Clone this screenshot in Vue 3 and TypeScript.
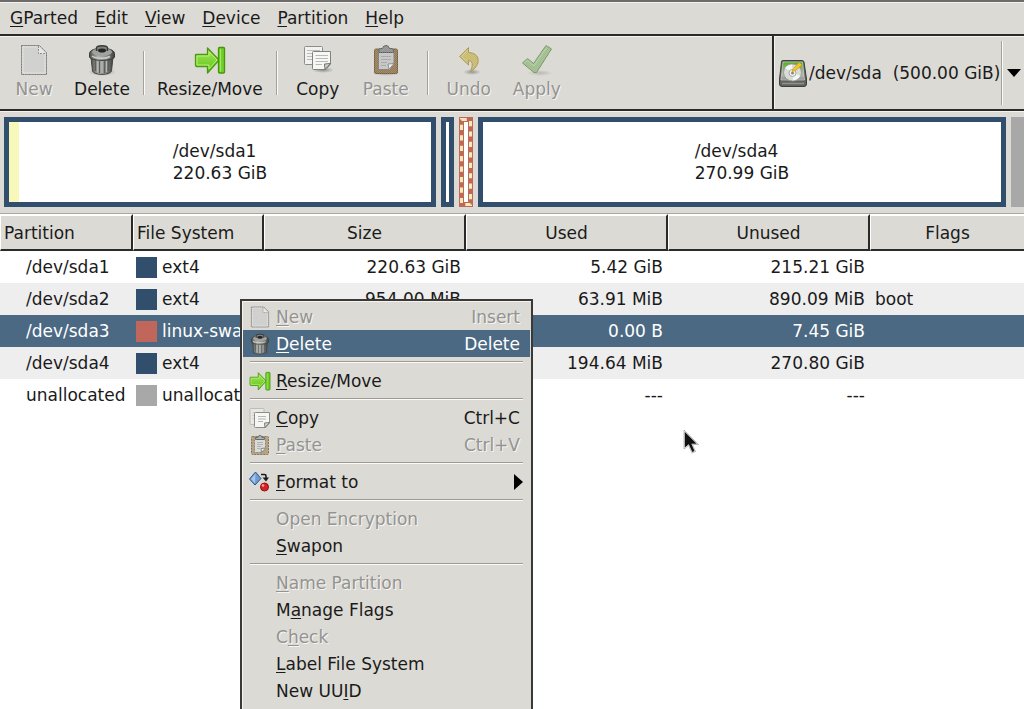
<script setup lang="ts">
import { ref } from 'vue'

interface Tool {
  label: string
  icon: string
  disabled?: boolean
  divider?: boolean
}

interface Row {
  name: string
  fs: string
  kind: 'ext' | 'swap' | 'free'
  size: string
  used: string
  unused: string
  flags: string
  selected?: boolean
}

interface Entry {
  text?: [string, string, string]
  icon?: string
  keys?: string
  disabled?: boolean
  active?: boolean
  submenu?: boolean
}

const menus = ['GParted', 'Edit', 'View', 'Device', 'Partition', 'Help']

const tools: Tool[] = [
  { label: 'New', icon: 'new', disabled: true },
  { label: 'Delete', icon: 'delete' },
  { label: 'Resize/Move', icon: 'resize', divider: true },
  { label: 'Copy', icon: 'copy', divider: true },
  { label: 'Paste', icon: 'paste', disabled: true },
  { label: 'Undo', icon: 'undo', disabled: true, divider: true },
  { label: 'Apply', icon: 'apply', disabled: true },
]

const device = ref('sda')
const columns = ['Partition', 'File System', 'Size', 'Used', 'Unused', 'Flags']

const rows: Row[] = [
  { name: '/dev/sda1', fs: 'ext4', kind: 'ext', size: '220.63 GiB', used: '5.42 GiB', unused: '215.21 GiB', flags: '' },
  { name: '/dev/sda2', fs: 'ext4', kind: 'ext', size: '954.00 MiB', used: '63.91 MiB', unused: '890.09 MiB', flags: 'boot' },
  { name: '/dev/sda3', fs: 'linux-swap', kind: 'swap', size: '7.45 GiB', used: '0.00 B', unused: '7.45 GiB', flags: '', selected: true },
  { name: '/dev/sda4', fs: 'ext4', kind: 'ext', size: '270.99 GiB', used: '194.64 MiB', unused: '270.80 GiB', flags: '' },
  { name: 'unallocated', fs: 'unallocated', kind: 'free', size: '1.00 MiB', used: '---', unused: '---', flags: '' },
]

// Each label is split into the text before, on and after its mnemonic letter.
const entries: Entry[] = [
  { text: ['', 'N', 'ew'], icon: 'new', keys: 'Insert', disabled: true },
  { text: ['', 'D', 'elete'], icon: 'delete', keys: 'Delete', active: true },
  {},
  { text: ['', 'R', 'esize/Move'], icon: 'resize' },
  {},
  { text: ['', 'C', 'opy'], icon: 'copy-small', keys: 'Ctrl+C' },
  { text: ['', 'P', 'aste'], icon: 'paste-small', keys: 'Ctrl+V', disabled: true },
  {},
  { text: ['', 'F', 'ormat to'], icon: 'format', submenu: true },
  {},
  { text: ['Open Encryption', '', ''], disabled: true },
  { text: ['', 'S', 'wapon'] },
  {},
  { text: ['', 'N', 'ame Partition'], disabled: true },
  { text: ['M', 'a', 'nage Flags'] },
  { text: ['C', 'h', 'eck'], disabled: true },
  { text: ['', 'L', 'abel File System'] },
  { text: ['New UU', 'I', 'D'] },
]
</script>

<template>
  <div class="window">
    <svg class="defs" aria-hidden="true">
      <defs>
        <linearGradient id="g-metal" x1="0" x2="1" y1="0" y2="0">
          <stop offset="0" stop-color="#4c4e4b" />
          <stop offset="0.35" stop-color="#b4b6b2" />
          <stop offset="0.65" stop-color="#8e908c" />
          <stop offset="1" stop-color="#3f413e" />
        </linearGradient>
        <linearGradient id="g-green" x1="0" x2="0" y1="0" y2="1">
          <stop offset="0" stop-color="#a6e65c" />
          <stop offset="1" stop-color="#5cc414" />
        </linearGradient>
        <linearGradient id="g-drive" x1="0" x2="0" y1="0" y2="1">
          <stop offset="0" stop-color="#4fae1c" />
          <stop offset="0.7" stop-color="#b9bcb6" />
          <stop offset="1" stop-color="#8d908a" />
        </linearGradient>
        <radialGradient id="g-shadow">
          <stop offset="0" stop-color="#000" stop-opacity="0.35" />
          <stop offset="1" stop-color="#000" stop-opacity="0" />
        </radialGradient>
        <pattern id="p-check" width="2" height="2" patternUnits="userSpaceOnUse">
          <path d="M0 0h1v1h-1zM1 1h1v1h-1z" fill="#dcdad5" fill-opacity="0.2" />
        </pattern>
      </defs>

      <symbol id="i-new" viewBox="0 0 32 32">
        <path d="M3.500 1.500H21.500L28.500 8.500V30.500H3.500Z" fill="#cfcfce" stroke="#a5a5a4" />
        <path d="M3.500 1.500H21.500L28.500 8.500V30.500H3.500Z" fill="none" stroke="#757575" stroke-dasharray="2 1" />
        <path d="M5 3H21V9H27V29H5Z" fill="none" stroke="#e2e2e0" />
        <path d="M20.500 2V9.500H28" fill="#e9e9e7" stroke="#858585" stroke-dasharray="2 1" />
        <rect width="32" height="32" fill="url(#p-check)" />
      </symbol>

      <symbol id="i-delete" viewBox="0 0 32 32">
        <ellipse cx="16" cy="28" rx="14" ry="4" fill="url(#g-shadow)" />
        <path d="M5 13L6.500 27C8 31.500 24 31.500 25.500 27L27 13Z" fill="url(#g-metal)" stroke="#434542" />
        <path d="M9.500 16V27M13.500 17V29M18.500 17V29M22.500 16V27" stroke="#5d5f5c" stroke-width="1.300" />
        <path d="M11.500 17V28M16 17V29M20.500 17V28" stroke="#b5b7b3" />
        <path d="M3.500 9.500C3.500 2.500 28.500 2.500 28.500 9.500V13C28 17.500 4 17.500 3.500 13Z" fill="url(#g-metal)" stroke="#393b38" />
        <ellipse cx="16" cy="8" rx="10" ry="4" fill="#a1a39f" />
        <path d="M10.500 7V4C10.500 1 21.500 1 21.500 4V7" fill="#80827e" stroke="#3a3c39" stroke-width="1.500" />
        <ellipse cx="16" cy="6.500" rx="4" ry="2" fill="#242524" />
        <path d="M6 12C10 15 20 15 24 12.500" fill="none" stroke="#cbcdc9" stroke-width="1.500" />
      </symbol>

      <symbol id="i-resize" viewBox="0 0 32 32">
        <path d="M1.500 11.500Q1 10.500 2.500 10.500H13.500V4L25 16L13.500 29V22.500H2.500Q1.500 22.500 1.500 21Z" fill="url(#g-green)" stroke="#499a0d" stroke-width="1.300" stroke-linejoin="round" />
        <path d="M3 12H15V8L23 16L15 25V21H3Z" fill="none" stroke="#b9ee80" />
        <rect x="24.500" y="3.500" width="6" height="25.500" rx="1" fill="#6fd02b" stroke="#459609" stroke-width="1.300" />
        <path d="M26.500 5V27.500" stroke="#a8e76b" />
      </symbol>

      <symbol id="i-copy" viewBox="0 0 32 32">
        <ellipse cx="21" cy="26" rx="11" ry="3" fill="url(#g-shadow)" />
        <rect x="2.500" y="2.500" width="18" height="18" rx="1" fill="#f2f2f1" stroke="#8c8e8a" />
        <path d="M5 6.500H18M5 9.500H18M5 12.500H10M5 15.500H10" stroke="#bcbdbb" />
        <path d="M11.500 7.500H28.500V20L24 25.500H11.500Q10.500 25.500 10.500 24.500V8.500Q10.500 7.500 11.500 7.500Z" fill="#f7f7f6" stroke="#80827e" />
        <path d="M13.500 11.500H26M13.500 14.500H26M13.500 17.500H26M13.500 20.500H20" stroke="#b8bab6" />
        <path d="M28.500 19.500L23 25.500L22.500 20Z" fill="#d1d2cf" stroke="#70726e" />
      </symbol>

      <symbol id="i-copy-small" viewBox="0 0 22 22">
        <rect x="1" y="1.500" width="14" height="16" rx="1" fill="#e8e8e5" stroke="#bcbdb9" />
        <path d="M3.500 5.500H7M3.500 8.500H5M3.500 11.500H5" stroke="#c9cac6" />
        <path d="M6.500 5.500H20.500V16L16.500 20.500H6.500Q5.500 20.500 5.500 19.500V6.500Q5.500 5.500 6.500 5.500Z" fill="#f6f6f5" stroke="#8b8d89" />
        <path d="M9 9.500H17M9 12H17M9 14.500H14" stroke="#b5b7b3" />
        <path d="M20.500 15.500L16 20.500L15.500 16Z" fill="#d8d9d6" stroke="#797b77" />
      </symbol>

      <symbol id="i-paste" viewBox="0 0 32 32">
        <ellipse cx="16" cy="29" rx="14" ry="3" fill="url(#g-shadow)" />
        <rect x="4.500" y="5" width="23" height="24.500" rx="1.500" fill="#96794f" stroke="#6f5f47" />
        <path d="M8.500 7.500H24V20.500L19.500 25.500H8.500Z" fill="#c5c6c5" stroke="#7b7d7c" />
        <path d="M11 12.500H21M11 15.500H21M11 18.500H17M11 21.500H16" stroke="#a3a5a5" />
        <path d="M24 19.500L19 25.500L18 20Z" fill="#eeefee" stroke="#868887" />
        <path d="M9 8.500V5.500Q9 4.500 11 4.500H12.500Q13 1.500 16 1.500T19.500 4.500H21Q23.500 4.500 23.500 6V8.500Z" fill="#8f9190" stroke="#5c5e5e" />
        <rect width="32" height="32" fill="url(#p-check)" />
      </symbol>

      <symbol id="i-paste-small" viewBox="0 0 22 22">
        <rect x="2.500" y="2.500" width="17" height="18" rx="1" fill="#b7a27f" stroke="#83745d" stroke-dasharray="2 1" />
        <path d="M5.500 4.500H16.500V15L13 18.500H5.500Z" fill="#dadbd9" stroke="#858786" stroke-dasharray="2 1" />
        <path d="M8 8.500H14M8 10.500H14M8 12.500H12M8 14.500H11" stroke="#b0b2b0" />
        <path d="M16.500 14L12.500 18.500L12 14.500Z" fill="#f1f2f1" stroke="#868887" />
        <path d="M6.500 5.500V3.500H9Q9 1.500 11 1.500T13 3.500H15.500V5.500Z" fill="#b0b2b0" stroke="#6a6c6a" />
      </symbol>

      <symbol id="i-undo" viewBox="0 0 32 32">
        <ellipse cx="19" cy="28" rx="9" ry="3" fill="url(#g-shadow)" />
        <path d="M15.500 3.500L6.500 12.500L15.500 21V16.500Q22 17 17.500 27.500Q26.500 22 25 14.500Q23.500 9 15.500 8.500Z" fill="#c9bb6b" stroke="#a2954d" stroke-linejoin="round" />
        <path d="M14.500 6.500L8.500 12.500L14.500 18" fill="none" stroke="#d9cd90" />
        <rect width="32" height="32" fill="url(#p-check)" />
      </symbol>

      <symbol id="i-apply" viewBox="0 0 32 32">
        <ellipse cx="19" cy="29" rx="13" ry="3" fill="url(#g-shadow)" opacity="0.500" />
        <path d="M25 1.500L30.500 5L15.500 28.500H13L1.500 19L6.500 14.500L12.500 19.500Z" fill="#9dbd8c" stroke="#71945f" stroke-linejoin="round" />
        <path d="M25.500 3.500L13 22L6.500 16.500L3.500 19" fill="none" stroke="#bad2ad" />
        <rect width="32" height="32" fill="url(#p-check)" />
      </symbol>

      <symbol id="i-format" viewBox="0 0 22 22">
        <path d="M6.500 1L12 7.500L6 14L0.500 8Z" fill="#6d9bd2" stroke="#2c5490" stroke-linejoin="round" />
        <path d="M6.500 2.500L6 12.500L2 8Z" fill="#a6c5e8" />
        <path d="M12 3.500H15.500Q17 3.500 17 5V8" fill="none" stroke="#1b1b1b" stroke-width="1.600" />
        <path d="M13.500 6.500H20L17 10.500Z" fill="#1b1b1b" />
        <circle cx="15.500" cy="16" r="4" fill="#d52222" stroke="#951111" />
        <circle cx="14" cy="14.500" r="1.300" fill="#f6a3a3" />
      </symbol>

      <symbol id="i-drive" viewBox="0 0 28 28">
        <path d="M3.500 1.500H23.500Q24.500 1.500 25 3L27.500 20V25Q27.500 27.500 25 27.500H3Q0.500 27.500 0.500 25V20L2.500 3Q2.500 1.500 3.500 1.500Z" fill="#60635f" stroke="#3d403c" />
        <path d="M4 3H23.500L25.500 21H2Z" fill="url(#g-drive)" stroke="#cdd0ca" stroke-width="0.700" />
        <ellipse cx="13.500" cy="13.500" rx="9" ry="8.500" fill="#d9dcd5" stroke="#989b95" />
        <path d="M13.500 13.500L6 9Q8.500 5.500 13 5.500ZM13.500 13.500L21.500 17Q18.500 21 14 21.500Z" fill="#f5f6f3" />
        <circle cx="13.500" cy="14" r="3.500" fill="#f4f5f2" stroke="#a5a8a2" />
        <circle cx="13.500" cy="14" r="1.500" fill="#858882" />
        <path d="M20 3.500L23 6L16.500 11.500L13 12.500L14.500 9.500Z" fill="#f2c52e" stroke="#c89b14" stroke-width="0.700" />
        <path d="M3 24.500H25" stroke="#8e918c" stroke-width="1.500" />
      </symbol>
    </svg>

    <nav class="menubar">
      <button v-for="m in menus" :key="m" type="button"><u>{{ m[0] }}</u>{{ m.slice(1) }}</button>
    </nav>

    <header class="toolbar">
      <div class="tools">
        <template v-for="t in tools" :key="t.label">
          <span v-if="t.divider" class="divider"></span>
          <button type="button" class="tool" :disabled="t.disabled">
            <svg class="tool-icon" aria-hidden="true"><use :href="'#i-' + t.icon" /></svg>
            <span>{{ t.label }}</span>
          </button>
        </template>
      </div>
      <div class="device">
        <label for="device" aria-label="Device">
          <svg class="drive-icon" aria-hidden="true"><use href="#i-drive" /></svg>
        </label>
        <select id="device" v-model="device">
          <option value="sda">/dev/sda&nbsp;&nbsp;(500.00 GiB)</option>
        </select>
        <span class="device-line"></span>
        <svg class="arrow-down" viewBox="0 0 14 8" aria-hidden="true"><path d="M0 0H14L7 8Z" /></svg>
      </div>
    </header>

    <section class="disk">
      <div class="part">
        <span class="fill"></span>
        <p>/dev/sda1<br />220.63 GiB</p>
      </div>
      <div class="part"></div>
      <svg class="part-selected" viewBox="0 0 14 90" preserveAspectRatio="none" aria-hidden="true">
        <rect x="2.500" y="2.500" width="9" height="85" fill="#fff" stroke="#c1665a" stroke-width="5" />
        <rect x="2.500" y="2.500" width="9" height="85" fill="none" stroke="#f5edb4" stroke-width="3" stroke-dasharray="5.220" />
      </svg>
      <div class="part">
        <p>/dev/sda4<br />270.99 GiB</p>
      </div>
      <div class="free"></div>
    </section>

    <main class="list">
      <table>
        <colgroup>
          <col class="col-name" />
          <col class="col-fs" />
          <col class="col-size" />
          <col class="col-size" />
          <col class="col-size" />
          <col />
        </colgroup>
        <thead>
          <tr>
            <th v-for="c in columns" :key="c" scope="col">{{ c }}</th>
          </tr>
        </thead>
        <tbody>
          <tr v-for="r in rows" :key="r.name" :class="{ selected: r.selected }">
            <td class="name">{{ r.name }}</td>
            <td>
              <div class="fs"><span class="swatch" :class="r.kind"></span>{{ r.fs }}</div>
            </td>
            <td class="num">{{ r.size }}</td>
            <td class="num">{{ r.used }}</td>
            <td class="num">{{ r.unused }}</td>
            <td class="flags">{{ r.flags }}</td>
          </tr>
        </tbody>
      </table>
    </main>

    <div class="context" role="menu">
      <template v-for="(e, i) in entries" :key="i">
        <button
          v-if="e.text"
          type="button"
          role="menuitem"
          class="entry"
          :class="{ active: e.active, submenu: e.submenu }"
          :disabled="e.disabled"
        >
          <svg class="entry-icon" aria-hidden="true"><use v-if="e.icon" :href="'#i-' + e.icon" /></svg>
          <span class="entry-text">{{ e.text[0] }}<u>{{ e.text[1] }}</u>{{ e.text[2] }}</span>
          <span v-if="e.keys">{{ e.keys }}</span>
          <svg v-if="e.submenu" class="arrow-right" viewBox="0 0 9 16" aria-hidden="true"><path d="M0 0V16L9 8Z" /></svg>
        </button>
        <div v-else class="rule" role="separator"></div>
      </template>
    </div>

    <svg class="pointer" viewBox="0 0 16 26" aria-hidden="true">
      <path d="M1 1V20L5.500 16.500L9 24L12.500 22.500L9.500 15.500H15.500Z" fill="#111" stroke="#fff" stroke-width="1.500" />
      <path d="M1 1V20L5.500 16.500L9 24L12.500 22.500L9.500 15.500H15.500Z" fill="none" stroke="#777" stroke-width="0.500" />
    </svg>
  </div>
</template>

<style>
body {
  background: #fff;
}
</style>

<style scoped>
.window {
  position: relative;
  display: flex;
  flex-direction: column;
  height: 100vh;
  overflow: hidden;
  background: #dcdad5;
  color: #1a1a1a;
  font-family: "DejaVu Sans", sans-serif;
  font-size: 17px;
  line-height: 22px;
}

.defs {
  position: absolute;
  width: 0;
  height: 0;
}

button,
select {
  margin: 0;
  padding: 0;
  border: 0;
  border-radius: 0;
  background: none;
  color: inherit;
  font: inherit;
  white-space: nowrap;
}

button:disabled {
  color: #939391;
  text-shadow: 1px 1px 0 #f6f5f3;
}

u {
  text-decoration: underline;
  text-decoration-thickness: 1px;
  text-underline-offset: 2px;
}

.menubar {
  display: flex;
  gap: 17px;
  height: 32px;
  padding-left: 10px;
  border-top: 2px solid #6d6c6b;
  border-bottom: 2px solid #2b2a29;
  box-shadow: inset 0 1px 0 #f4f3f0;
}

.toolbar {
  display: flex;
  justify-content: space-between;
  height: 73px;
  border-bottom: 2px solid #2b2a29;
  box-shadow: inset 0 1px 0 #f4f3f0;
}

.tools {
  display: flex;
}

.tool {
  display: flex;
  flex-direction: column;
  align-items: center;
  gap: 2px;
  min-width: 68px;
  padding: 8px 6px 0;
}

.tool-icon {
  width: 32px;
  height: 32px;
}

.divider {
  width: 2px;
  height: 44px;
  margin: 15px 6px 0 7px;
  border-left: 1px solid #a2a19a;
  border-right: 1px solid #fbfaf8;
  box-sizing: border-box;
}

.device {
  display: flex;
  align-items: center;
  padding-left: 5px;
  padding-right: 3px;
  border-left: 2px solid #2b2a29;
  box-shadow: inset 1px 1px 0 #f4f3f0;
}

.drive-icon {
  display: block;
  width: 28px;
  height: 28px;
  margin-right: 2px;
}

.device select {
  appearance: none;
  outline: 0;
}

.device-line {
  width: 2px;
  height: 64px;
  margin-right: 4px;
  box-sizing: border-box;
  border-left: 1px solid #a2a19a;
  border-right: 1px solid #fbfaf8;
}

.arrow-down {
  width: 14px;
  height: 8px;
}

.disk {
  display: grid;
  grid-template-columns: 432fr 13fr 14fr 528fr 13fr;
  gap: 5px;
  height: 90px;
  padding: 6px 0 6px 4px;
  border-bottom: 1px solid #aaa79d;
  box-shadow: inset 0 1px 0 #f4f3f0;
}

.part {
  position: relative;
  display: flex;
  align-items: center;
  justify-content: center;
  box-sizing: border-box;
  border: 5px solid #314e6c;
  background: #fff;
}

.part p {
  margin: 0;
}

.part-selected {
  display: block;
  width: 100%;
  height: 90px;
}

.fill {
  position: absolute;
  top: 0;
  bottom: 0;
  left: 0;
  width: 10px;
  background: #f8f8ba;
}

.list {
  flex: 1;
  background: #fff;
}

table {
  width: 100%;
  table-layout: fixed;
  border-collapse: separate;
  border-spacing: 0;
}

.col-name {
  width: 133px;
}

.col-fs {
  width: 131px;
}

.col-size {
  width: 202px;
}

th {
  height: 33px;
  padding: 0 3px;
  border-top: 2px solid #fff;
  border-left: 1px solid #fff;
  border-right: 2px solid #2b2a29;
  border-bottom: 2px solid #2b2a29;
  background: #dcdad5;
  font-weight: normal;
  white-space: nowrap;
}

th:nth-child(-n + 2) {
  text-align: left;
}

th:last-child {
  border-right: 0;
}

td {
  height: 32px;
  padding: 0;
  overflow: hidden;
  white-space: nowrap;
}

tbody tr:nth-child(even) {
  background: #eee;
}

tbody tr.selected {
  background: #4b6983;
  color: #fff;
}

.name {
  padding-left: 26px;
}

.fs {
  display: flex;
  align-items: center;
  gap: 5px;
  padding-left: 3px;
}

.swatch {
  flex: none;
  width: 21px;
  height: 21px;
}

.ext {
  background: #314e6c;
}

.swap {
  background: #c1665a;
}

.free {
  background: #a8a8a8;
}

.num {
  padding-right: 5px;
  text-align: right;
}

.flags {
  padding-left: 5px;
}

.context {
  position: absolute;
  top: 299px;
  bottom: 0;
  left: 240px;
  width: 293px;
  padding: 2px 1px 0;
  box-sizing: border-box;
  border: 2px solid #3a3936;
  border-bottom: 0;
  background: #dcdad5;
  box-shadow: inset 1px 1px 0 #f4f3f0;
  overflow: hidden;
}

.entry {
  display: flex;
  align-items: center;
  width: 100%;
  height: 27px;
  padding: 0 10px 0 6px;
  text-align: left;
}

.entry.submenu {
  padding-right: 7px;
}

.entry.active {
  background: #4b6983;
  color: #fff;
}

.entry-icon {
  width: 22px;
  height: 22px;
  margin-right: 5px;
}

.entry-text {
  flex: 1;
}

.arrow-right {
  width: 9px;
  height: 16px;
}

.rule {
  height: 1px;
  margin: 4px 7px;
  border-top: 1px solid #9c9b93;
  background: #fbfaf8;
}

.pointer {
  position: absolute;
  top: 429px;
  left: 683px;
  width: 16px;
  height: 26px;
}
</style>
